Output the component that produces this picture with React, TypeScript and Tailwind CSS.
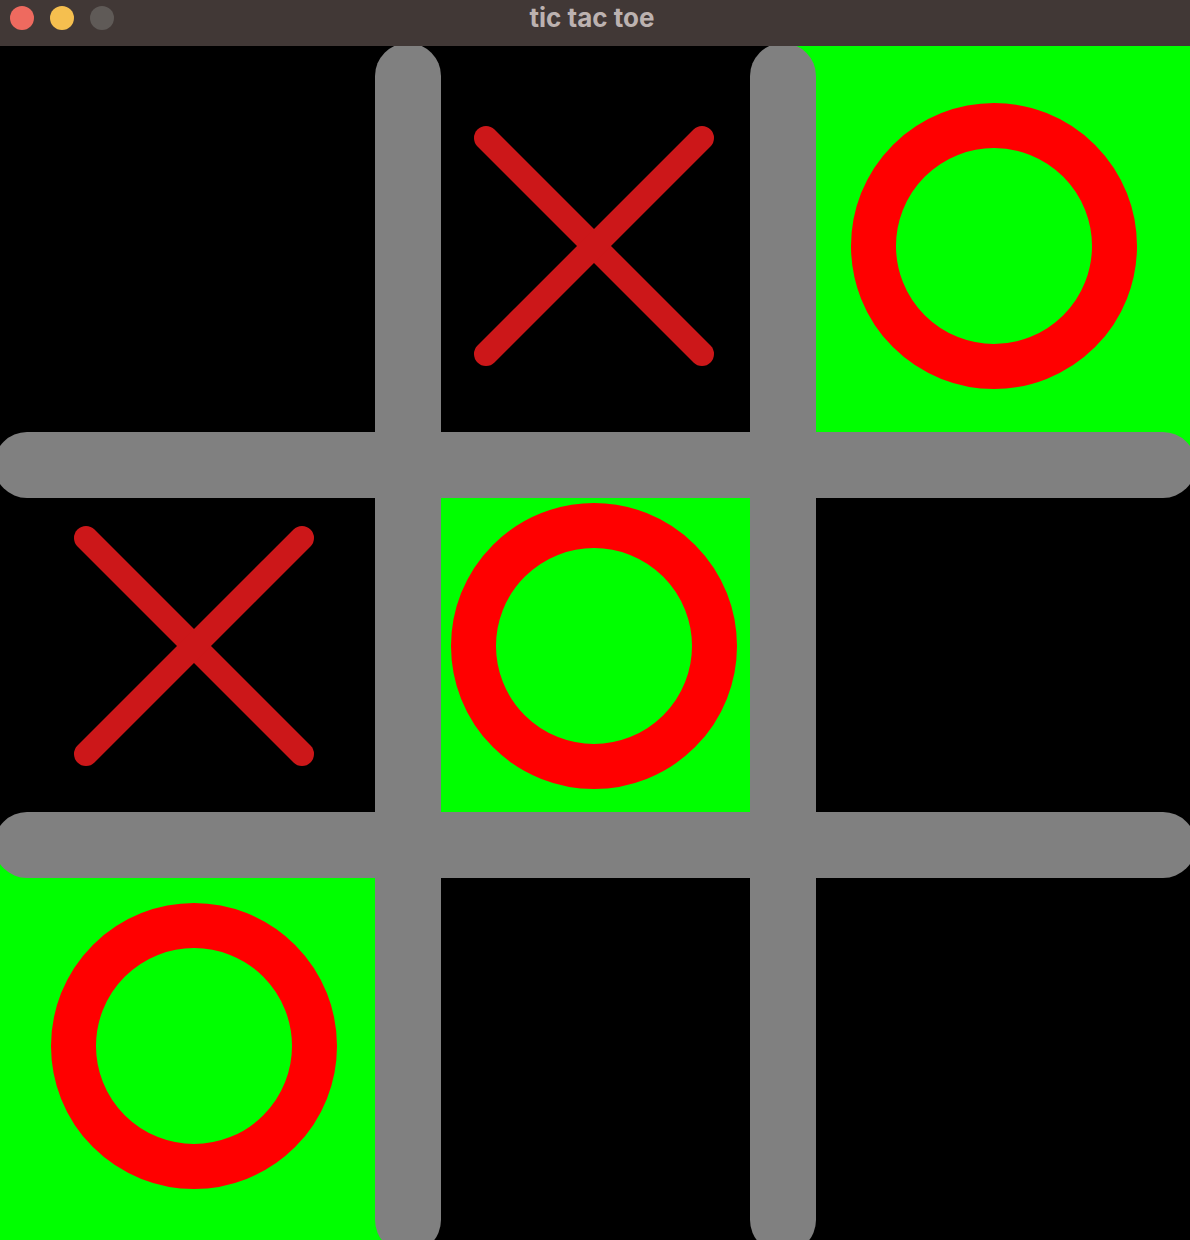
import React from "react";

type Mark = "X" | "O" | null;

const board: Mark[][] = [
  [null, "X", "O"],
  ["X", "O", null],
  ["O", null, null],
];

const Cross = () => (
  <svg width="400" height="400" viewBox="0 0 400 400">
    <line x1="92" y1="92" x2="308" y2="308" stroke="#cc1719" strokeWidth="24" strokeLinecap="round" />
    <line x1="308" y1="92" x2="92" y2="308" stroke="#cc1719" strokeWidth="24" strokeLinecap="round" />
  </svg>
);

const Nought = () => (
  <div className="h-[286px] w-[286px] rounded-full border-[45px] border-[#ff0000]" />
);

const Cell = ({ mark }: { mark: Mark }) => (
  <div
    className={
      mark === "O"
        ? "flex h-[400px] w-[400px] items-center justify-center bg-[#00ff00]"
        : "flex h-[400px] w-[400px] items-center justify-center bg-black"
    }
  >
    {mark === "X" && <Cross />}
    {mark === "O" && <Nought />}
  </div>
);

export default function App() {
  return (
    <div className="h-[1240px] w-[1190px] overflow-hidden bg-black" style={{ fontFamily: "Inter, 'Open Sans', sans-serif" }}>
      {/* Title bar */}
      <div className="grid h-[46px] grid-cols-[1fr_auto_1fr] items-start bg-[#413836] pt-[5px]">
        <div className="flex items-center gap-4 pl-[10px] pt-px">
          <span className="h-6 w-6 rounded-full bg-[#ee6a5f]" />
          <span className="h-6 w-6 rounded-full bg-[#f5bf4f]" />
          <span className="h-6 w-6 rounded-full bg-[#5f5a57]" />
        </div>
        <div className="pr-[6px] text-[26px] font-bold leading-[26px] text-[#bcb2b0]">tic tac toe</div>
        <div />
      </div>

      {/* Board */}
      <div className="h-[1194px] w-[1190px] overflow-hidden">
        <div className="relative -ml-[6px] h-[1194px] w-[1200px]">
          <div className="grid grid-cols-[400px_400px_400px] grid-rows-[400px_400px_400px]">
            {board.map((row, r) =>
              row.map((mark, c) => <Cell key={`${r}-${c}`} mark={mark} />)
            )}
          </div>

          {/* grid lines */}
          <div className="absolute left-[381px] top-[-3px] h-[1210px] w-[66px] rounded-full bg-[#808080]" />
          <div className="absolute left-[756px] top-[-3px] h-[1210px] w-[66px] rounded-full bg-[#808080]" />
          <div className="absolute left-0 top-[386px] h-[66px] w-[1202px] rounded-full bg-[#808080]" />
          <div className="absolute left-0 top-[766px] h-[66px] w-[1202px] rounded-full bg-[#808080]" />
        </div>
      </div>
    </div>
  );
}
